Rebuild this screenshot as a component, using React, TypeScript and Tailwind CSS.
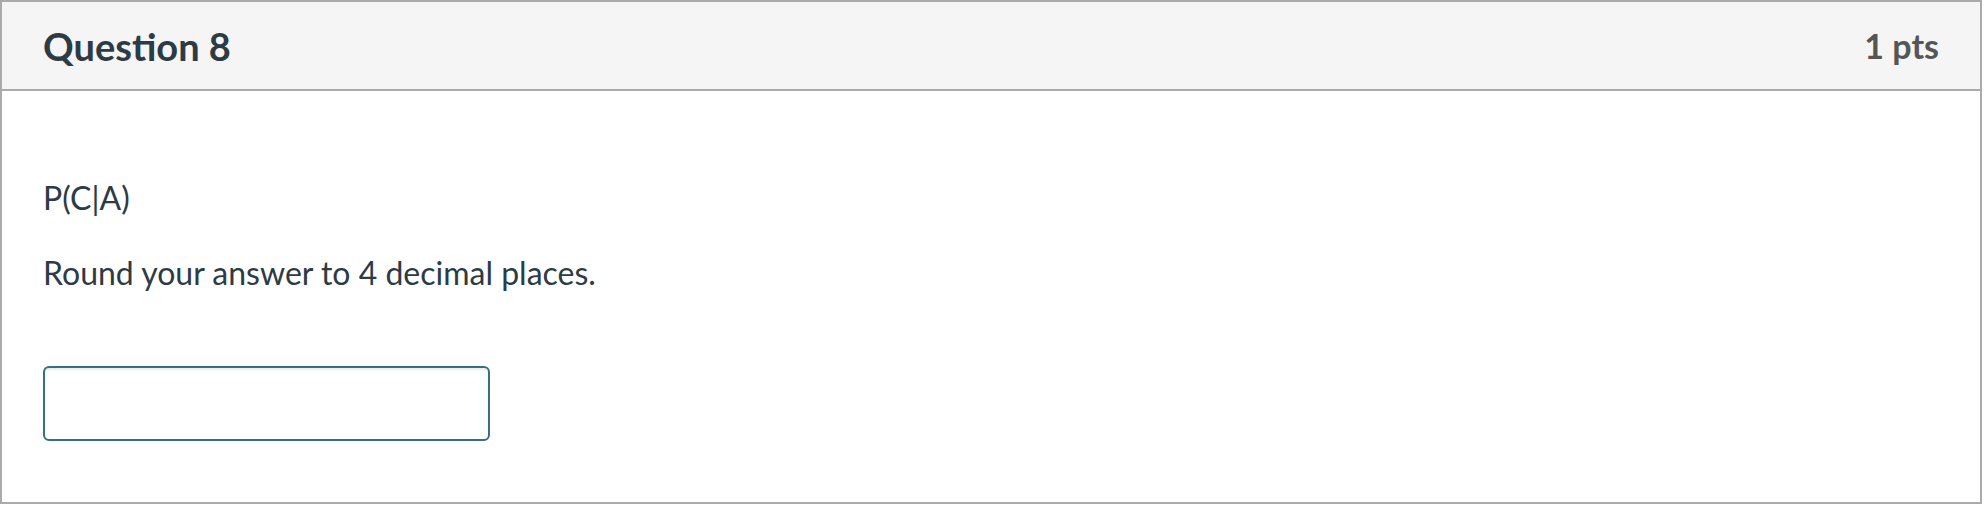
export default function App() {
  return (
    <div className="w-[1986px] h-[514px] bg-white" style={{ fontFamily: "Lato, 'Noto Sans', sans-serif" }}>
      <div className="w-[1982px] h-[504px] border-2 border-[#aaaaaa] flex flex-col bg-white">
        <div className="h-[89px] bg-[#f5f5f5] border-b-2 border-[#aaaaaa] flex items-center justify-between pl-[41px] pr-[41px] shrink-0">
          <h2 className="text-[38px] font-bold text-[#2d3b45] leading-none">Question 8</h2>
          <span className="text-[34px] font-bold text-[#565656] leading-none">1 pts</span>
        </div>
        <div className="flex-1 pl-[41px] pt-[83px] text-[#2d3b45] text-[32px] leading-[48px]">
          <p>P(C|A)</p>
          <p className="mt-[27px]">Round your answer to 4 decimal places.</p>
          <div className="mt-[69px]">
            <input
              type="text"
              aria-label="answer"
              className="w-[447px] h-[75px] border-2 border-[#356f82] rounded-[6px] bg-white shadow-[inset_0_2px_2px_rgba(0,0,0,0.08)] outline-none px-3"
            />
          </div>
        </div>
      </div>
    </div>
  );
}
